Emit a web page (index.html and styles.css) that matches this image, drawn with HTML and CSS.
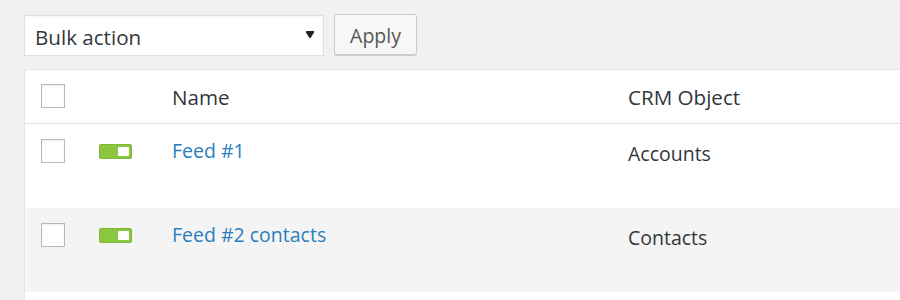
FILE: index.html
```html
<!DOCTYPE html>
<html lang="en">
<head>
<meta charset="utf-8">
<title>Feeds</title>
<link rel="stylesheet" href="styles.css">
</head>
<body>
<div class="page">
  <div class="toolbar">
    <div class="select">
      <span class="select-label">Bulk action</span>
      <svg class="select-arrow" width="8" height="7" viewBox="0 0 8 7"><path d="M0 0H8V1.5L4.6 7H3.4L0 1.5Z" fill="#222"/></svg>
    </div>
    <button class="button">Apply</button>
  </div>
  <div class="table">
    <div class="row head">
      <div class="cell cb"><span class="checkbox"></span></div>
      <div class="cell status"></div>
      <div class="cell name">Name</div>
      <div class="cell obj">CRM Object</div>
    </div>
    <div class="row">
      <div class="cell cb"><span class="checkbox"></span></div>
      <div class="cell status"><span class="toggle"><span class="knob"></span></span></div>
      <div class="cell name"><a href="#" class="link">Feed #1</a></div>
      <div class="cell obj">Accounts</div>
    </div>
    <div class="row alt">
      <div class="cell cb"><span class="checkbox"></span></div>
      <div class="cell status"><span class="toggle"><span class="knob"></span></span></div>
      <div class="cell name"><a href="#" class="link">Feed #2 contacts</a></div>
      <div class="cell obj">Contacts</div>
    </div>
    <div class="row">
      <div class="cell cb"></div>
      <div class="cell status"></div>
      <div class="cell name"></div>
      <div class="cell obj"></div>
    </div>
  </div>
</div>
</body>
</html>
```

FILE: styles.css
```css
html, body {
  margin: 0;
  padding: 0;
  overflow: hidden;
  background: #f1f1f1;
}
body {
  font-family: "Open Sans", "Noto Sans", sans-serif;
  color: #32373c;
}
.page {
  box-sizing: border-box;
  width: 900px;
  height: 300px;
  overflow: hidden;
  padding: 14px 0 0 24px;
}
.toolbar {
  display: flex;
  align-items: flex-start;
  gap: 10px;
  height: 42px;
}
.select {
  box-sizing: border-box;
  margin-top: 1px;
  width: 300px;
  height: 41px;
  background: #fff;
  border: 1px solid #dedede;
  box-shadow: inset 0 1px 2px rgba(0,0,0,0.04);
  display: flex;
  align-items: center;
  justify-content: space-between;
  padding: 0 9px 0 10px;
}
.select-label {
  font-size: 20.6px;
  line-height: 28px;
  color: #32373c;
  margin-top: 3px;
}
.select-arrow {
  display: block;
  margin-top: -2px;
}
.button {
  box-sizing: border-box;
  width: 83px;
  height: 41px;
  font-family: "Open Sans", "Noto Sans", sans-serif;
  font-size: 19.5px;
  color: #555;
  background: #f7f7f7;
  border: 1px solid #cccccc;
  border-radius: 3px;
  box-shadow: 0 1px 0 #cccccc;
  padding: 1px 0 0;
  margin: 0;
}
.table {
  margin-top: 13px;
  margin-right: -200px;
  background: #fff;
  border: 1px solid #e5e5e5;
  box-shadow: 0 1px 1px rgba(0,0,0,0.04);
}
.row {
  display: grid;
  grid-template-columns: 59px 72px 456px 1fr;
  height: 84px;
}
.row.head {
  height: 53px;
  border-bottom: 1px solid #e1e1e1;
}
.row.alt {
  background: #f4f4f4;
}
.cell {
  padding-left: 16px;
  font-size: 19.5px;
  line-height: 27px;
  padding-top: 16px;
}
.head .cell {
  font-size: 20.6px;
  line-height: 28px;
  padding-top: 13px;
  color: #32373c;
}
.cell.cb {
  padding-top: 15px;
}
.head .cell.cb {
  padding-top: 14px;
}
.cell.status {
  padding-left: 15px;
  padding-top: 20px;
}
.row .cell.name {
  padding-top: 13px;
}
.head .cell.name {
  padding-top: 13px;
}
.checkbox {
  display: block;
  box-sizing: border-box;
  width: 24px;
  height: 24px;
  border: 1px solid #b4b9be;
  background: #fff;
  box-shadow: inset 0 1px 2px rgba(0,0,0,0.08);
}
.toggle {
  display: flex;
  justify-content: flex-end;
  align-items: center;
  box-sizing: border-box;
  width: 33px;
  height: 15px;
  background: #8cc63e;
  border: 1px solid #7fb733;
  border-radius: 2px;
  padding-right: 2px;
}
.knob {
  display: block;
  width: 11px;
  height: 9px;
  background: #fff;
  border-radius: 1px;
}
.link {
  color: #2a7fbd;
  text-decoration: none;
}
```
